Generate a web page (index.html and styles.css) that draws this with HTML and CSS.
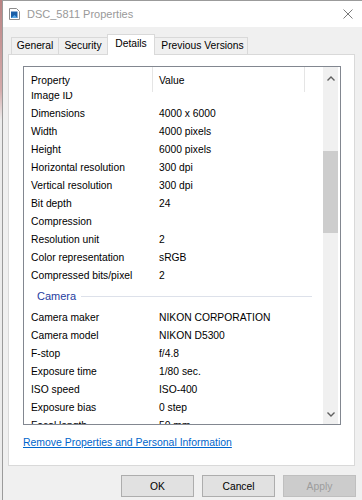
FILE: index.html
```html
<!DOCTYPE html>
<html lang="en">
<head>
    <title>DSC_5811 Properties</title>
    <link rel="stylesheet" href="styles.css">
</head>
<body>
    <div class="window">
        <div class="titlebar">
            <svg class="file-icon" width="11" height="12" viewBox="0 0 11 12">
                <path d="M0.5 0.5h7l3 3v8h-10z" fill="#fff" stroke="#8c8c8c"/>
                <rect x="2" y="3.5" width="6.5" height="6.5" fill="#1a5fa8"/>
                <path d="M2 10l3.5-3 3 3z" fill="#58a8e6"/>
            </svg>
            <span class="title">DSC_5811 Properties</span>
            <svg class="close" width="10" height="10" viewBox="0 0 10 10">
                <path d="M0.5 0.5l9 9M9.5 0.5l-9 9" stroke="#7a7a7a" fill="none"/>
            </svg>
        </div>

        <div class="content">
            <div class="tabs">
                <div class="tab tab-general">General</div>
                <div class="tab tab-security">Security</div>
                <div class="tab tab-details selected">Details</div>
                <div class="tab tab-versions">Previous Versions</div>
            </div>

            <div class="panel">
                <div class="list">
                    <div class="list-main">
                        <div class="list-head">
                            <div class="head-cell head-prop">Property</div>
                            <div class="head-cell head-val">Value</div>
                        </div>
                        <div class="rows">
                            <div class="rows-inner">
                                <div class="row"><span class="prop">Image ID</span><span class="val"></span></div>
                                <div class="row"><span class="prop">Dimensions</span><span class="val">4000 x 6000</span></div>
                                <div class="row"><span class="prop">Width</span><span class="val">4000 pixels</span></div>
                                <div class="row"><span class="prop">Height</span><span class="val">6000 pixels</span></div>
                                <div class="row"><span class="prop">Horizontal resolution</span><span class="val">300 dpi</span></div>
                                <div class="row"><span class="prop">Vertical resolution</span><span class="val">300 dpi</span></div>
                                <div class="row"><span class="prop">Bit depth</span><span class="val">24</span></div>
                                <div class="row"><span class="prop">Compression</span><span class="val"></span></div>
                                <div class="row"><span class="prop">Resolution unit</span><span class="val">2</span></div>
                                <div class="row"><span class="prop">Color representation</span><span class="val">sRGB</span></div>
                                <div class="row"><span class="prop">Compressed bits/pixel</span><span class="val">2</span></div>
                                <div class="group">Camera</div>
                                <div class="row"><span class="prop">Camera maker</span><span class="val">NIKON CORPORATION</span></div>
                                <div class="row"><span class="prop">Camera model</span><span class="val">NIKON D5300</span></div>
                                <div class="row"><span class="prop">F-stop</span><span class="val">f/4.8</span></div>
                                <div class="row"><span class="prop">Exposure time</span><span class="val">1/80 sec.</span></div>
                                <div class="row"><span class="prop">ISO speed</span><span class="val">ISO-400</span></div>
                                <div class="row"><span class="prop">Exposure bias</span><span class="val">0 step</span></div>
                                <div class="row"><span class="prop">Focal length</span><span class="val">50 mm</span></div>
                            </div>
                        </div>
                    </div>
                    <div class="scrollbar">
                        <div class="sb-btn sb-up">
                            <svg width="8" height="5" viewBox="0 0 8 5"><path d="M0.5 4.5L4 1l3.5 3.5" stroke="#606060" stroke-width="1.4" fill="none"/></svg>
                        </div>
                        <div class="sb-track"><div class="sb-thumb"></div></div>
                        <div class="sb-btn sb-down">
                            <svg width="8" height="5" viewBox="0 0 8 5"><path d="M0.5 0.5L4 4l3.5-3.5" stroke="#606060" stroke-width="1.4" fill="none"/></svg>
                        </div>
                    </div>
                </div>
                <a class="remove-link" href="#">Remove Properties and Personal Information</a>
            </div>

            <div class="buttons">
                <button class="btn">OK</button>
                <button class="btn">Cancel</button>
                <button class="btn btn-disabled">Apply</button>
            </div>
        </div>
    </div>
</body>
</html>
```

FILE: styles.css
```css
html {
    background: linear-gradient(#b98383 0, #d4abab 90px, #ececec 120px, #ececec 100%);
}
body {
    margin: 0;
    font-family: "Liberation Sans", Arial, sans-serif;
    font-size: 10.3px;
    color: #000;
}
.window {
    margin-left: 2px;
    width: 360px;
    height: 500px;
    border-top: 1px solid #9b9b9b;
    border-left: 1px solid #9b9b9b;
    background: #f0f0f0;
    box-sizing: border-box;
    overflow: hidden;
}
.titlebar {
    height: 26px;
    background: #fff;
    display: flex;
    align-items: center;
    padding-left: 6px;
}
.title {
    margin-left: 7px;
    font-size: 11px;
    color: #999;
}
.close {
    margin-left: auto;
    margin-right: 9px;
}
.content {
    padding: 7px 7px 0 5px;
}
.tabs {
    display: flex;
    align-items: flex-end;
    height: 20px;
    margin-left: 3px;
    position: relative;
    z-index: 1;
}
.tab {
    height: 17px;
    line-height: 15px;
    border: 1px solid #d9d9d9;
    border-bottom: 0;
    background: #f0f0f0;
    margin-right: -1px;
    text-align: center;
    box-sizing: border-box;
}
.tab.selected {
    height: 21px;
    line-height: 18px;
    margin-bottom: -1px;
    background: #fff;
    position: relative;
}
.tab-general { width: 48px; }
.tab-security { width: 50px; }
.tab-details { width: 48px; }
.tab-versions { width: 94px; padding-left: 3px; }

.panel {
    height: 412px;
    background: #fff;
    border: 1px solid #d9d9d9;
    box-sizing: border-box;
    padding: 11px 13px 0 14px;
}
.list {
    display: flex;
    height: 359px;
    border: 1px solid #828790;
    box-sizing: border-box;
    padding-right: 2px;
}
.list-main {
    flex: 1;
    display: flex;
    flex-direction: column;
    overflow: hidden;
}
.list-head {
    display: flex;
    flex: none;
    height: 25px;
    position: relative;
    z-index: 1;
    background: #fff;
}
.head-cell {
    display: flex;
    align-items: center;
    padding-top: 2px;
    border-right: 1px solid #e5e5e5;
    box-sizing: border-box;
}
.head-prop {
    width: 129px;
    padding-left: 7px;
}
.head-val {
    width: 152px;
    padding-left: 6px;
}
.rows {
    flex: 1;
    overflow: hidden;
}
.rows-inner {
    margin-top: -6px;
}
.row {
    display: flex;
    align-items: center;
    height: 18px;
    white-space: nowrap;
}
.prop {
    width: 129px;
    padding-left: 7px;
    box-sizing: border-box;
}
.val {
    padding-left: 6px;
}
.group {
    display: flex;
    align-items: center;
    height: 24px;
    padding-left: 13px;
    font-size: 11px;
    color: #1f3d9f;
}
.group::after {
    content: "";
    flex: 1;
    height: 1px;
    margin: 0 11px 0 5px;
    background: #dde1ea;
}
.scrollbar {
    width: 15px;
    flex: none;
    display: flex;
    flex-direction: column;
    background: #f0f0f0;
}
.sb-btn {
    display: flex;
    align-items: center;
    justify-content: center;
}
.sb-up { height: 22px; }
.sb-down { height: 20px; }
.sb-track {
    flex: 1;
}
.sb-thumb {
    margin-top: 62px;
    height: 82px;
    background: #cdcdcd;
}
.remove-link {
    display: inline-block;
    margin-top: 12px;
    font-size: 10.45px;
    line-height: 12px;
    color: #0066cc;
    text-decoration: underline;
}
.buttons {
    display: flex;
    justify-content: flex-end;
    gap: 8px;
    margin-top: 9px;
    margin-right: -1px;
}
.btn {
    width: 73px;
    height: 22px;
    padding: 0;
    border: 1px solid #adadad;
    background: #e1e1e1;
    font: inherit;
    color: #000;
}
.btn-disabled {
    background: #cccccc;
    border-color: #bfbfbf;
    color: #9c9c9c;
}
```
